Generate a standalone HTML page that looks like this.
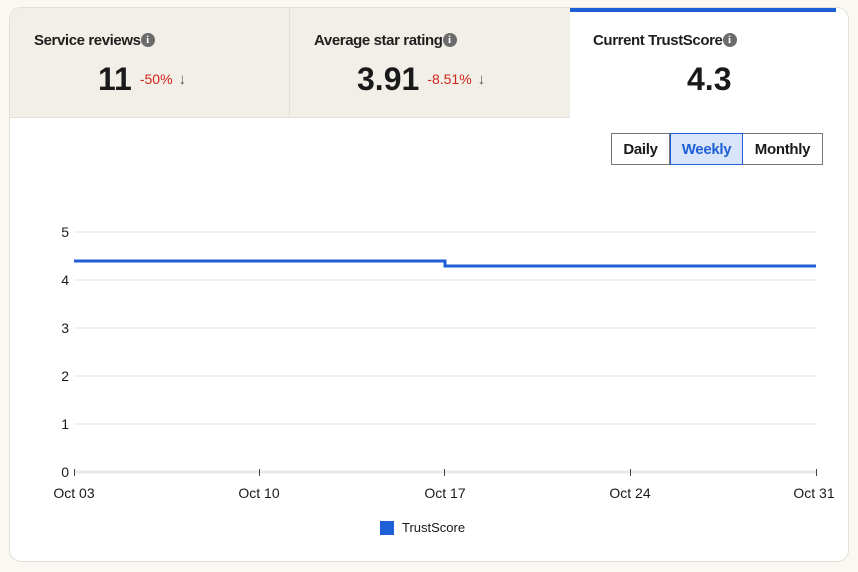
<!DOCTYPE html>
<html><head><style>
*{box-sizing:border-box;margin:0;padding:0}
body{width:858px;height:572px;background:#f9f8f2;font-family:"Liberation Sans",Arial,sans-serif;color:#1a1a1a;position:relative;overflow:hidden}
.card{position:absolute;left:9px;top:7px;width:840px;height:555px;background:#fff;border:1px solid #e2e0d8;border-radius:12px;overflow:hidden}
.tab{position:absolute;top:0;height:110px;background:#f1efe7;border-bottom:1px solid #e2e0d8}
.t1{left:0;width:280px;border-right:1px solid #e2e0d8}
.t2{left:280px;width:280px}
.t3{left:560px;width:266px;background:#fff;border-bottom:none;border-top:4px solid #1f5fd6}
.lbl{position:absolute;top:24px;font-size:15px;font-weight:bold;color:#1f1f1f;letter-spacing:-0.4px}
.i{display:inline-block;width:14px;height:14px;border-radius:50%;background:#6b6b6b;color:#fff;font-size:11px;text-align:center;line-height:14px;vertical-align:2px;font-family:"Liberation Serif",serif;font-weight:bold;letter-spacing:0}
.val{position:absolute;top:53px;font-size:32px;font-weight:bold;white-space:nowrap}
.ch{font-size:14px;color:#d1231b;font-weight:normal;vertical-align:6px;margin-left:8px}
.ar{font-size:15px;color:#555;font-weight:normal;vertical-align:6px;margin-left:6px}
.btns{position:absolute;left:601px;top:125px;display:flex;height:32px;font-size:15px;font-weight:bold;letter-spacing:-0.3px}
.btns div{border:1px solid #767676;line-height:32px;text-align:center}
</style></head><body>
<div class="card">
<div class="tab t1"><div class="lbl" style="left:24px">Service reviews<span class="i">i</span></div><div class="val" style="left:88px">11<span class="ch">-50%</span><span class="ar">↓</span></div></div>
<div class="tab t2"><div class="lbl" style="left:24px">Average star rating<span class="i">i</span></div><div class="val" style="left:67px">3.91<span class="ch">-8.51%</span><span class="ar">↓</span></div></div>
<div class="tab t3"><div class="lbl" style="left:23px;top:20px">Current TrustScore<span class="i">i</span></div><div class="val" style="left:117px;top:49px">4.3</div></div>
<div class="btns"><div style="width:59px">Daily</div><div style="width:73px;background:#d7e4f9;color:#1f5fd6;border-color:#1f5fd6">Weekly</div><div style="width:80px;border-left:none">Monthly</div></div>
</div>
<svg style="position:absolute;left:0;top:0" width="858" height="572" font-family="Liberation Sans,Arial,sans-serif" font-size="14" fill="#1a1a1a">
<g stroke="#ececec" stroke-width="1.5">
<line x1="74" x2="816" y1="232" y2="232"/><line x1="74" x2="816" y1="280" y2="280"/><line x1="74" x2="816" y1="328" y2="328"/><line x1="74" x2="816" y1="376" y2="376"/><line x1="74" x2="816" y1="424" y2="424"/></g>
<line x1="74" x2="816" y1="472" y2="472" stroke="#e8e8e8" stroke-width="3"/>
<g stroke="#444" stroke-width="1"><line x1="74.5" x2="74.5" y1="469" y2="476"/><line x1="259.5" x2="259.5" y1="469" y2="476"/><line x1="444.5" x2="444.5" y1="469" y2="476"/><line x1="630.5" x2="630.5" y1="469" y2="476"/><line x1="816.5" x2="816.5" y1="469" y2="476"/></g>
<g text-anchor="end"><text x="69" y="237">5</text><text x="69" y="285">4</text><text x="69" y="333">3</text><text x="69" y="381">2</text><text x="69" y="429">1</text><text x="69" y="477">0</text></g>
<g text-anchor="middle"><text x="74" y="498">Oct 03</text><text x="259" y="498">Oct 10</text><text x="445" y="498">Oct 17</text><text x="630" y="498">Oct 24</text><text x="814" y="498">Oct 31</text></g>
<path d="M74 261 H445 V266 H816" fill="none" stroke="#1f5fd6" stroke-width="3"/>
<rect x="380" y="521" width="14" height="14" fill="#1f5fd6"/>
<text x="402" y="532" font-size="13">TrustScore</text>
</svg>
</body></html>
